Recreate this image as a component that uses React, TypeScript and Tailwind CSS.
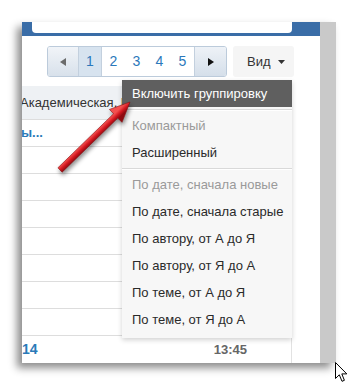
import React from "react";

const menuGroups = [
  [
    { label: "Компактный", muted: true },
    { label: "Расширенный", muted: false },
  ],
  [
    { label: "По дате, сначала новые", muted: true },
    { label: "По дате, сначала старые", muted: false },
    { label: "По автору, от А до Я", muted: false },
    { label: "По автору, от Я до А", muted: false },
    { label: "По теме, от А до Я", muted: false },
    { label: "По теме, от Я до А", muted: false },
  ],
];

function Pager() {
  return (
    <div className="flex h-[31px] rounded-[3px] border border-[#bccbdb] overflow-hidden text-[14px] text-[#2b78bb]">
      <div className="w-[31px] flex items-center justify-center bg-gradient-to-b from-[#f1f4f8] to-[#d8e1eb] border-r border-[#c3d0de]">
        <svg width="6" height="8" viewBox="0 0 6 8">
          <path d="M6 0 L0 4 L6 8 Z" fill="#6b6b6b" />
        </svg>
      </div>
      <div className="w-[23px] flex items-center justify-center bg-[#d7e3ef] border-r border-[#c3d0de]">1</div>
      {["2", "3", "4", "5"].map((n) => (
        <div key={n} className="w-[23px] flex items-center justify-center bg-white">
          {n}
        </div>
      ))}
      <div className="w-[32px] flex items-center justify-center bg-gradient-to-b from-[#eef2f7] to-[#d5dfea] border-l border-[#c3d0de]">
        <svg width="6" height="8" viewBox="0 0 6 8">
          <path d="M0 0 L6 4 L0 8 Z" fill="#111" />
        </svg>
      </div>
    </div>
  );
}

function Menu() {
  return (
    <div className="absolute left-[100px] top-[58px] w-[170px] bg-[#f7f7f7] pb-[5px] shadow-[0_2px_5px_rgba(0,0,0,0.18)] text-[13px]">
      <div className="h-[27px] flex items-center pl-[10px] bg-[#5f5f5f] text-white">Включить группировку</div>
      {menuGroups.map((group, gi) => (
        <div key={gi}>
          <div className="mt-[2px] mb-[1px] h-px bg-[#d9d9d9] border-b border-white box-content" />
          {group.map((item) => (
            <div
              key={item.label}
              className={`h-[27px] flex items-center pl-[10px] ${item.muted ? "text-[#9a9a9a]" : "text-[#2a2a2a]"}`}
            >
              {item.label}
            </div>
          ))}
        </div>
      ))}
    </div>
  );
}

export default function App() {
  const emptyRows = Array.from({ length: 7 });

  return (
    <div className="relative w-[358px] h-[386px] overflow-hidden bg-white pl-[22px] pt-[22px] font-['Liberation_Sans',Arial,sans-serif] text-[13px] text-[#333]">
      <div className="relative flex w-[314px] h-[341px] shadow-[-5px_5px_8px_rgba(0,0,0,0.45)]">
        <div className="w-[298px] flex flex-col bg-white">
          {/* top bar */}
          <div className="h-[14px] bg-[#3a6da7] pl-[10px] pr-[28px]">
            <div className="h-[11px] bg-white rounded-b-[4px]" />
          </div>

          {/* toolbar */}
          <div className="h-[50px] flex items-start gap-[6px] pt-[10px] pl-[25px]">
            <Pager />
            <div className="w-[61px] h-[31px] flex items-center pl-[14px] gap-[7px] bg-[#f5f5f5] rounded-[3px] text-[13px] text-[#333]">
              Вид
              <svg width="7" height="4" viewBox="0 0 7 4">
                <path d="M0 0 L7 0 L3.5 4 Z" fill="#333" />
              </svg>
            </div>
          </div>

          {/* table */}
          <div className="w-[270px] flex-1 flex flex-col border-r border-[#e2e2e2] overflow-hidden">
            <div className="h-[34px] shrink-0 flex items-center bg-[#eef1f4] border-b border-[#dddddd]">
              <div className="w-[100px] overflow-hidden whitespace-nowrap">
                <span className="block -ml-[2px]">Академическая, П</span>
              </div>
            </div>
            <div className="h-[27px] shrink-0 flex items-center border-b border-[#dddddd] whitespace-nowrap">
              <span className="-ml-[9px] font-bold text-[#2a7ab8]">вы...</span>
            </div>
            {emptyRows.map((_, i) => (
              <div key={i} className="h-[27px] shrink-0 border-b border-[#dddddd]" />
            ))}
            <div className="h-[27px] shrink-0 flex items-center justify-between pr-[44px] font-bold">
              <span className="text-[#2a7ab8] text-[14px]">14</span>
              <span className="text-[#666]">13:45</span>
            </div>
          </div>
        </div>

        {/* scrollbar strip */}
        <div className="w-[16px] bg-[#c9c9c9]" />

        <Menu />
      </div>

      {/* red annotation arrow */}
      <svg
        className="absolute left-0 top-0 pointer-events-none drop-shadow-[1px_3px_2px_rgba(0,0,0,0.45)]"
        width="358"
        height="386"
        viewBox="0 0 358 386"
      >
        <defs>
          <linearGradient id="arrowRed" gradientUnits="userSpaceOnUse" x1="57.9" y1="167.8" x2="62.1" y2="172.2">
            <stop offset="0" stopColor="#f2504f" />
            <stop offset="0.5" stopColor="#d3171f" />
            <stop offset="1" stopColor="#8e0a10" />
          </linearGradient>
        </defs>
        <path
          d="M57.9 167.8 L113.6 113.75 L109.4 109.45 L130 102 L122 122.35 L117.8 118.05 L62.1 172.2 Z"
          fill="url(#arrowRed)"
          stroke="#8a0a0e"
          strokeWidth="0.6"
          strokeLinejoin="round"
        />
      </svg>

      {/* mouse cursor */}
      <svg className="absolute left-[335px] top-[362px]" width="13" height="21" viewBox="0 0 13 21">
        <path
          d="M0.5 0.5 L0.5 16.5 L4.3 12.8 L7 19.3 L9.4 18.3 L6.8 11.9 L11.8 11.9 Z"
          fill="#fff"
          stroke="#000"
          strokeWidth="1"
          strokeLinejoin="miter"
        />
      </svg>
    </div>
  );
}
